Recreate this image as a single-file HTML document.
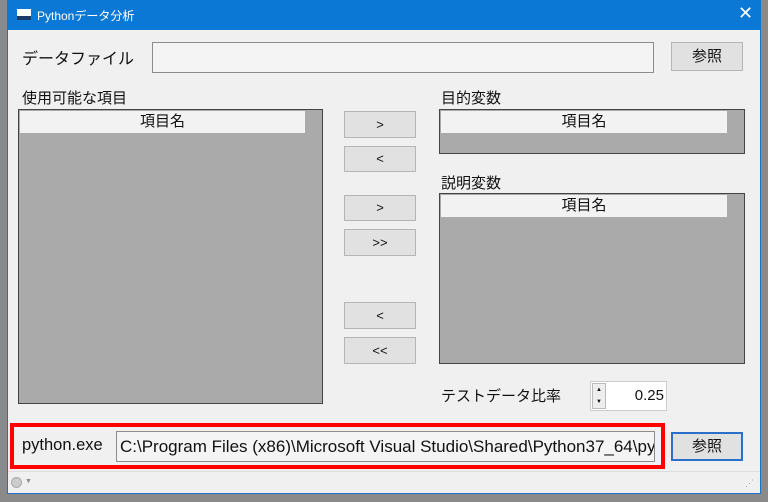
<!DOCTYPE html>
<html><head><meta charset="utf-8"><style>
*{box-sizing:border-box;margin:0;padding:0}
body{width:768px;height:502px;background:#8a8a8a;position:relative;overflow:hidden;font-family:"Liberation Sans","Noto Sans CJK JP",sans-serif;color:#111}
.a{position:absolute}
.win{left:7px;top:0;width:754px;height:494px;background:#f0f0f0;border:1px solid #1a73c8}
.title{left:7px;top:0;width:754px;height:30px;background:#0a78d4;color:#fff;font-size:12px}
.lbl{font-size:15px;white-space:nowrap}
.tb{background:#f4f4f4;border:1px solid #8c8c8c}
.btn{background:#e1e1e1;border:1px solid #b5b5b5;font-size:13px;text-align:center}
.list{background:#aaa;border:1px solid #444}
.hdr{background:#f2f2f2;font-size:15px;text-align:center;line-height:22px}
</style></head><body>
<div class="a win"></div>
<div class="a title">
 <div class="a" style="left:10px;top:9px;width:14px;height:11px;background:#fff;border-bottom:4px solid #1b3c6a"></div>
 <div class="a" style="left:30px;top:7px">Pythonデータ分析</div>
 <div class="a" style="left:731px;top:3px;font-size:18px">✕</div>
</div>
<div class="a lbl" style="left:22px;top:45px;font-size:16px">データファイル</div>
<div class="a tb" style="left:152px;top:42px;width:502px;height:31px"></div>
<div class="a btn" style="left:671px;top:42px;width:72px;height:29px;line-height:27px;font-size:15px">参照</div>

<div class="a lbl" style="left:22px;top:87px">使用可能な項目</div>
<div class="a list" style="left:18px;top:109px;width:305px;height:295px"><div class="a hdr" style="left:1px;top:1px;width:285px;height:22px">項目名</div></div>

<div class="a btn" style="left:344px;top:111px;width:72px;height:27px;line-height:25px">&gt;</div>
<div class="a btn" style="left:344px;top:146px;width:72px;height:26px;line-height:24px">&lt;</div>
<div class="a btn" style="left:344px;top:195px;width:72px;height:26px;line-height:24px">&gt;</div>
<div class="a btn" style="left:344px;top:229px;width:72px;height:27px;line-height:25px">&gt;&gt;</div>
<div class="a btn" style="left:344px;top:302px;width:72px;height:27px;line-height:25px">&lt;</div>
<div class="a btn" style="left:344px;top:337px;width:72px;height:27px;line-height:25px">&lt;&lt;</div>

<div class="a lbl" style="left:441px;top:87px">目的変数</div>
<div class="a list" style="left:439px;top:109px;width:306px;height:45px"><div class="a hdr" style="left:1px;top:1px;width:286px;height:22px">項目名</div></div>
<div class="a lbl" style="left:441px;top:172px">説明変数</div>
<div class="a list" style="left:439px;top:193px;width:306px;height:171px"><div class="a hdr" style="left:1px;top:1px;width:286px;height:22px">項目名</div></div>

<div class="a lbl" style="left:441px;top:385px">テストデータ比率</div>
<div class="a" style="left:590px;top:381px;width:77px;height:30px;background:#fff;border:1px solid #ccc">
 <div class="a" style="left:1px;top:1px;width:14px;height:26px;background:#eee;border:1px solid #bbb;font-size:6px;text-align:center;line-height:12px">▲<br>▼</div>
 <div class="a" style="right:2px;top:5px;font-size:15px">0.25</div>
</div>

<div class="a" style="left:10px;top:423px;width:655px;height:46px;border:4px solid #f00"></div>
<div class="a lbl" style="left:22px;top:436px;font-size:16.5px">python.exe</div>
<div class="a tb" style="left:116px;top:431px;width:539px;height:31px;overflow:hidden;font-size:17px;line-height:29px;padding-left:3px;white-space:nowrap">C:\Program Files (x86)\Microsoft Visual Studio\Shared\Python37_64\python.exe</div>
<div class="a btn" style="left:671px;top:432px;width:72px;height:29px;line-height:25px;font-size:15px;border:2px solid #2a6fc9">参照</div>

<div class="a" style="left:8px;top:471px;width:752px;height:1px;background:#ddd"></div>
<div class="a" style="left:11px;top:477px;width:11px;height:11px;border-radius:50%;background:#ccc;border:1px solid #aaa"></div>
<div class="a" style="left:25px;top:478px;font-size:7px;color:#888">▼</div>
<div class="a" style="left:745px;top:478px;font-size:9px;color:#aaa">⋰</div>
</body></html>
